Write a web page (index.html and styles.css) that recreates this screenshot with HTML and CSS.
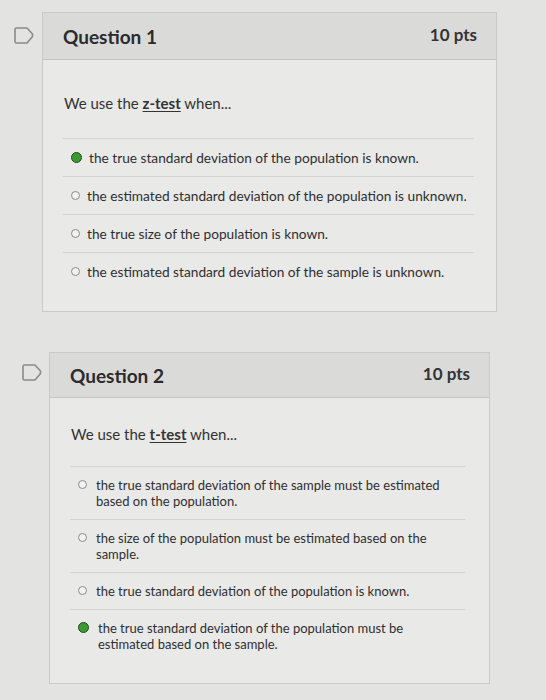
FILE: index.html
```html
<!DOCTYPE html>
<html>
<head>
<meta charset="utf-8">
<link rel="stylesheet" href="styles.css">
</head>
<body>
<div class="page">
  <div class="question q1">
    <svg class="flag" width="20" height="17" viewBox="0 0 20 17"><path d="M2.5 1 H13 L18.5 7 V9.5 L13 16 H2.5 Q1 16 1 14.5 V2.5 Q1 1 2.5 1 Z" fill="none" stroke="#8a8a8a" stroke-width="1.6" stroke-linejoin="round"/></svg>
    <div class="card">
      <div class="card-head">
        <span class="title">Question 1</span>
        <span class="pts">10 pts</span>
      </div>
      <div class="card-body">
        <p class="prompt">We use the <u class="term">z-test</u> when...</p>
        <ul class="answers">
          <li class="answer"><span class="radio on"></span><span class="label">the true standard deviation of the population is known.</span></li>
          <li class="answer"><span class="radio"></span><span class="label">the estimated standard deviation of the population is unknown.</span></li>
          <li class="answer"><span class="radio"></span><span class="label">the true size of the population is known.</span></li>
          <li class="answer"><span class="radio"></span><span class="label">the estimated standard deviation of the sample is unknown.</span></li>
        </ul>
      </div>
    </div>
  </div>

  <div class="question q2">
    <svg class="flag" width="20" height="17" viewBox="0 0 20 17"><path d="M2.5 1 H13 L18.5 7 V9.5 L13 16 H2.5 Q1 16 1 14.5 V2.5 Q1 1 2.5 1 Z" fill="none" stroke="#8a8a8a" stroke-width="1.6" stroke-linejoin="round"/></svg>
    <div class="card">
      <div class="card-head">
        <span class="title">Question 2</span>
        <span class="pts">10 pts</span>
      </div>
      <div class="card-body">
        <p class="prompt">We use the <u class="term">t-test</u> when...</p>
        <ul class="answers">
          <li class="answer"><span class="radio"></span><span class="label">the true standard deviation of the sample must be estimated based on the population.</span></li>
          <li class="answer"><span class="radio"></span><span class="label">the size of the population must be estimated based on the sample.</span></li>
          <li class="answer"><span class="radio"></span><span class="label">the true standard deviation of the population is known.</span></li>
          <li class="answer"><span class="radio on"></span><span class="label">the true standard deviation of the population must be estimated based on the sample.</span></li>
        </ul>
      </div>
    </div>
  </div>
</div>
</body>
</html>
```

FILE: styles.css
```css
html, body {
  margin: 0;
  padding: 0;
  background: #e3e3e2;
  font-family: Lato, "Open Sans", sans-serif;
  color: #2f2f31;
}

.page {
  padding: 12px 0 0 14px;
  height: 700px;
  box-sizing: border-box;
}

.question {
  display: flex;
  align-items: flex-start;
}

.flag {
  flex: none;
  margin-top: 15px;
}

.q1 .card {
  margin-left: 8px;
  width: 455px;
}

.q2 {
  margin-top: 40px;
  padding-left: 8px;
}

.q2 .flag {
  margin-top: 12px;
}

.q2 .card {
  margin-left: 7px;
  width: 441px;
}

.card {
  border: 1px solid #c9c9c9;
  background: #e9e9e8;
  box-sizing: border-box;
}

.card-head {
  display: flex;
  justify-content: space-between;
  align-items: center;
  height: 46px;
  padding: 0 19px 0 20px;
  background: #dadad9;
  border-bottom: 1px solid #c4c4c4;
}

.q2 .card-head {
  height: 44px;
}

.title {
  font-size: 19px;
  font-weight: 700;
  color: #2b2b2e;
}

.pts {
  font-size: 17px;
  font-weight: 700;
  color: #333336;
  margin-top: -4px;
}

.card-body {
  padding: 34px 22px 21px 20px;
}

.q2 .card-body {
  padding: 27px 24px 21px 20px;
}

.prompt {
  margin: 0 0 26px 1px;
  font-size: 15px;
  line-height: 18px;
  color: #333;
}

.q2 .prompt {
  margin-bottom: 23px;
}

.term {
  font-weight: 700;
  text-decoration-thickness: 1px;
  text-underline-offset: 2px;
}

.answers {
  list-style: none;
  margin: 0;
  padding: 0;
}

.answer {
  display: flex;
  align-items: flex-start;
  gap: 7px;
  border-top: 1px solid #d3d3d2;
  padding: 11px 0 10px 8px;
  font-size: 13.7px;
  line-height: 16px;
}

.q1 .label {
  white-space: nowrap;
}

.q2 .answer {
  font-size: 13px;
  line-height: 16px;
  padding: 10px 0 10px 8px;
  gap: 9px;
}

.q2 .label {
  max-width: 352px;
}

.radio {
  flex: none;
  width: 7px;
  height: 7px;
  margin-top: 3px;
  border: 1.5px solid #8a8a8a;
  border-radius: 50%;
  background: #f2f2f2;
}

.radio.on {
  width: 9px;
  height: 9px;
  margin-top: 2px;
  border: 1px solid #1f4a1f;
  background: #3c9a34;
}
```
